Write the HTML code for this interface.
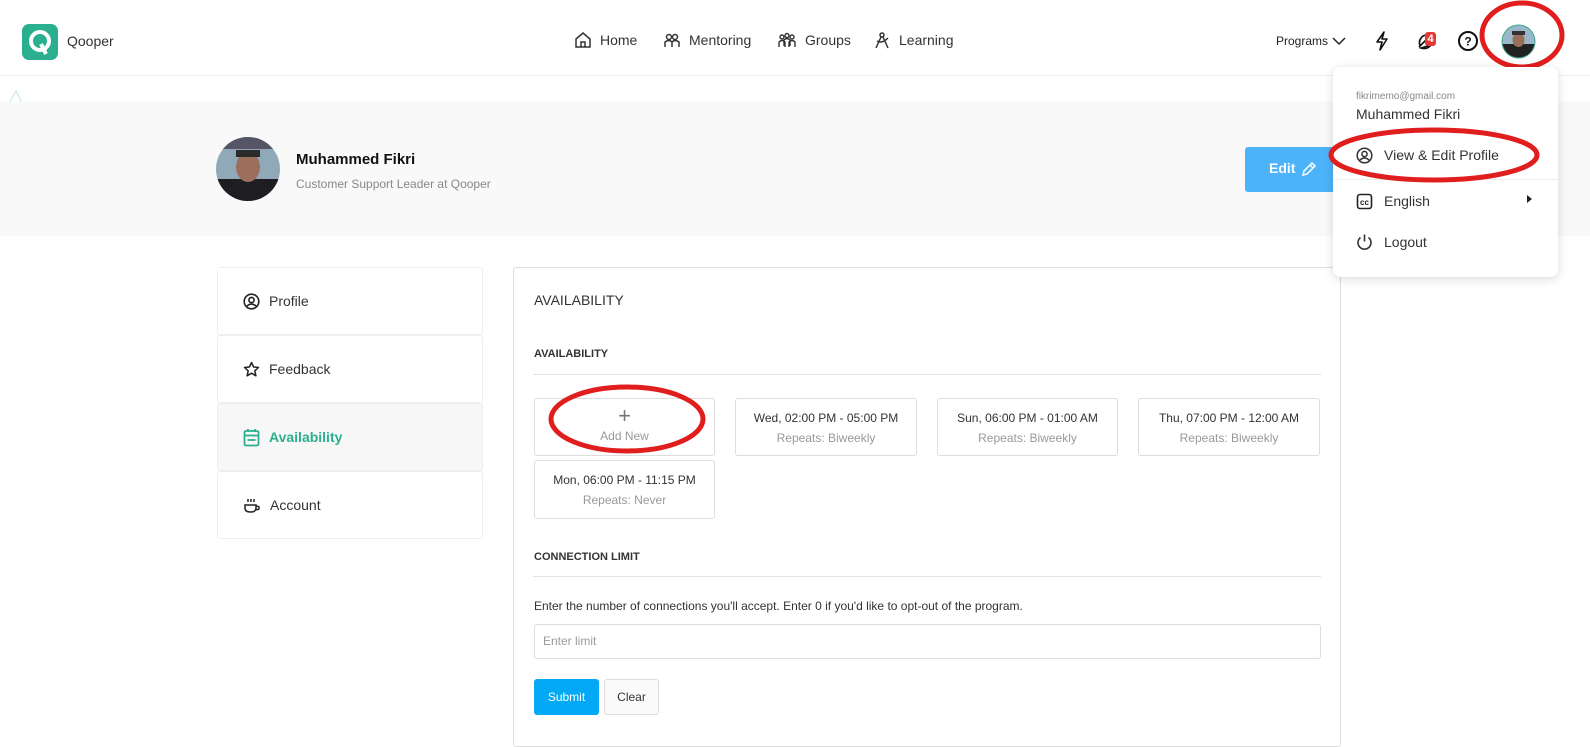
<!DOCTYPE html>
<html><head><meta charset="utf-8">
<style>
*{box-sizing:border-box;margin:0;padding:0}
body{width:1590px;height:738px;overflow:hidden;background:#fff;font-family:"Liberation Sans",Arial,sans-serif;color:#222;position:relative}
.a{position:absolute}
.nav{font-size:14px;color:#333;display:flex;align-items:center;gap:8px}
.card{position:absolute;border:1px solid #ddd;border-radius:3px;text-align:center;background:#fff}
.card .t{font-size:12px;color:#333;margin-top:12px}
.card .s{font-size:12px;color:#999;margin-top:6px}
.side{position:absolute;left:217px;width:266px;height:68px;border:1px solid #eee;border-radius:3px;display:flex;align-items:center;padding-left:25px;gap:9px;font-size:14px;color:#333;background:#fff}
svg{display:block}
</style></head><body>

<!-- header -->
<div class="a" style="left:0;top:0;width:1590px;height:76px;border-bottom:1px solid #eee"></div>
<div class="a" style="left:22px;top:24px;width:36px;height:36px;background:#2bb08f;border-radius:7px">
<svg width="36" height="36"><circle cx="18" cy="17" r="9" fill="none" stroke="#fff" stroke-width="4"/><path d="M19 20 L24 30" stroke="#fff" stroke-width="4"/></svg></div>
<div class="a" style="left:67px;top:33px;font-size:14px;color:#333">Qooper</div>
<svg class="a" style="left:8px;top:90px" width="16" height="14"><path d="M1 13 L8 1 L14 13" fill="none" stroke="#bfe6dc" stroke-width="1"/></svg>

<div class="a nav" style="left:574px;top:31px"><svg width="18" height="18" viewBox="0 0 18 18"><path d="M2 8 L9 2 L16 8 V16 H2Z M7 16 V11 H11 V16" fill="none" stroke="#333" stroke-width="1.5"/></svg>Home</div>
<div class="a nav" style="left:663px;top:31px"><svg width="18" height="18" viewBox="0 0 18 18"><circle cx="6" cy="6" r="2.5" fill="none" stroke="#333" stroke-width="1.5"/><circle cx="12" cy="6" r="2.5" fill="none" stroke="#333" stroke-width="1.5"/><path d="M2 16 V11 Q6 8 9 11 V16 M9 11 Q12 8 16 11 V16" fill="none" stroke="#333" stroke-width="1.5"/></svg>Mentoring</div>
<div class="a nav" style="left:777px;top:31px"><svg width="20" height="18" viewBox="0 0 20 18"><circle cx="5" cy="6" r="2" fill="none" stroke="#333" stroke-width="1.4"/><circle cx="10" cy="4.5" r="2" fill="none" stroke="#333" stroke-width="1.4"/><circle cx="15" cy="6" r="2" fill="none" stroke="#333" stroke-width="1.4"/><path d="M2 16 V11 Q5 8 8 11 V16 M7 15 V9 Q10 6 13 9 V15 M12 16 V11 Q15 8 18 11 V16" fill="none" stroke="#333" stroke-width="1.4"/></svg>Groups</div>
<div class="a nav" style="left:873px;top:31px"><svg width="18" height="18" viewBox="0 0 18 18"><circle cx="9" cy="4" r="2" fill="none" stroke="#333" stroke-width="1.5"/><path d="M8 6 L3 17 M10 6 L15 17 M4 10 Q9 13 15 7" fill="none" stroke="#333" stroke-width="1.5"/></svg>Learning</div>

<div class="a" style="left:1276px;top:34px;font-size:12px;color:#222">Programs</div>
<svg class="a" style="left:1331px;top:35px" width="16" height="12"><path d="M2 3 L8 9 L14 3" fill="none" stroke="#222" stroke-width="1.5"/></svg>
<svg class="a" style="left:1374px;top:31px" width="16" height="20" viewBox="0 0 16 20"><path d="M10 1 L3 11 H8 L6 19 L13 8 H8 Z" fill="none" stroke="#111" stroke-width="1.6" stroke-linejoin="round"/></svg>
<svg class="a" style="left:1415px;top:32px" width="20" height="20"><path d="M4 15 L15 4 M5 14 Q3 8 8 4 Q12 2 15 4 M6 16 Q12 18 16 13 Z" fill="none" stroke="#111" stroke-width="1.6"/></svg>
<div class="a" style="left:1425px;top:32px;width:11px;height:14px;background:#e53935;border-radius:3px;color:#fff;font-size:11px;font-weight:bold;text-align:center;line-height:14px">4</div>
<svg class="a" style="left:1457px;top:30px" width="22" height="22"><circle cx="11" cy="11" r="9" fill="none" stroke="#111" stroke-width="2"/><text x="11" y="15.5" font-size="12" font-weight="bold" text-anchor="middle" fill="#111" font-family="Liberation Sans">?</text></svg>
<svg class="a" style="left:1501px;top:24px" width="35" height="35"><defs><clipPath id="c2"><circle cx="17.5" cy="17.5" r="16"/></clipPath></defs><circle cx="17.5" cy="17.5" r="17" fill="#3aa58c"/><g clip-path="url(#c2)"><rect width="35" height="35" fill="#9bb8c8"/><rect y="20" width="35" height="15" fill="#222"/><ellipse cx="17.5" cy="16" rx="6" ry="7" fill="#9a6f5a"/><rect x="11" y="7" width="13" height="4" fill="#333"/></g></svg>
<svg class="a" style="left:1478px;top:0" width="90" height="72"><ellipse cx="44" cy="35" rx="40" ry="32" fill="none" stroke="#e01e1e" stroke-width="5"/></svg>

<!-- band -->
<div class="a" style="left:0;top:102px;width:1590px;height:134px;background:#f9f9f9"></div>
<svg class="a" style="left:216px;top:137px" width="64" height="64"><defs><clipPath id="c1"><circle cx="32" cy="32" r="32"/></clipPath></defs><g clip-path="url(#c1)"><rect width="64" height="64" fill="#8fa9b8"/><rect y="0" width="64" height="12" fill="#556"/><rect y="42" width="64" height="22" fill="#1e1e22"/><ellipse cx="32" cy="30" rx="12" ry="15" fill="#9c6f5c"/><rect x="20" y="13" width="24" height="7" fill="#2a2a2a"/></g></svg>
<div class="a" style="left:296px;top:151px;font-size:15px;font-weight:bold;color:#111">Muhammed Fikri</div>
<div class="a" style="left:296px;top:177px;font-size:12px;color:#888">Customer Support Leader at Qooper</div>
<div class="a" style="left:1245px;top:147px;width:100px;height:45px;background:#4db3f9;border-radius:3px;color:#fff;font-weight:bold;font-size:14px;padding:13px 0 0 24px">Edit
<svg style="position:absolute;left:56px;top:14px" width="16" height="16"><path d="M2 14 L3 10 L11 2 L14 5 L6 13 Z M9 4 L12 7" fill="none" stroke="#fff" stroke-width="1.5"/></svg></div>

<!-- sidebar -->
<div class="side" style="top:267px"><svg width="17" height="17"><circle cx="8.5" cy="8.5" r="7.3" fill="none" stroke="#222" stroke-width="1.6"/><circle cx="8.5" cy="7" r="2.6" fill="none" stroke="#222" stroke-width="1.6"/><path d="M3.5 13.5 Q8.5 8.5 13.5 13.5" fill="none" stroke="#222" stroke-width="1.6"/></svg>Profile</div>
<div class="side" style="top:335px"><svg width="17" height="17" viewBox="0 0 17 17"><path d="M8.5 1.5 L10.6 6 L15.5 6.5 L11.8 9.8 L12.9 14.8 L8.5 12.2 L4.1 14.8 L5.2 9.8 L1.5 6.5 L6.4 6 Z" fill="none" stroke="#222" stroke-width="1.5" stroke-linejoin="round"/></svg>Feedback</div>
<div class="side" style="top:403px;background:#f7f7f7;color:#2bb08f;font-weight:bold"><svg width="17" height="19"><rect x="1.5" y="3" width="14" height="14.5" rx="1.5" fill="none" stroke="#2bb08f" stroke-width="1.8"/><path d="M1.5 7.5 H15.5 M5 1 V4 M12 1 V4 M4.5 12 H12.5" stroke="#2bb08f" stroke-width="1.8"/></svg>Availability</div>
<div class="side" style="top:471px"><svg width="18" height="17"><path d="M2 8 H13 V11 Q13 15 7.5 15 Q2 15 2 11 Z M13 9 Q16.5 9 16 11.5 Q15.5 13 13 12.5 M5 2 V5 M8 2 V5 M11 2 V5" fill="none" stroke="#222" stroke-width="1.5"/></svg>Account</div>

<!-- main panel -->
<div class="a" style="left:513px;top:267px;width:828px;height:480px;border:1px solid #ddd;border-radius:3px"></div>
<div class="a" style="left:534px;top:292px;font-size:14px;color:#333">AVAILABILITY</div>
<div class="a" style="left:534px;top:348px;font-size:11px;font-weight:bold;color:#333">AVAILABILITY</div>
<div class="a" style="left:533px;top:374px;width:788px;height:1px;background:#e2e2e2"></div>

<div class="card" style="left:534px;top:398px;width:181px;height:58px"><div style="font-size:22px;color:#777;font-weight:300;line-height:20px;margin-top:7px">+</div><div class="s" style="margin-top:3px">Add New</div></div>
<div class="card" style="left:735px;top:398px;width:182px;height:58px"><div class="t">Wed, 02:00 PM - 05:00 PM</div><div class="s">Repeats: Biweekly</div></div>
<div class="card" style="left:937px;top:398px;width:181px;height:58px"><div class="t">Sun, 06:00 PM - 01:00 AM</div><div class="s">Repeats: Biweekly</div></div>
<div class="card" style="left:1138px;top:398px;width:182px;height:58px"><div class="t">Thu, 07:00 PM - 12:00 AM</div><div class="s">Repeats: Biweekly</div></div>
<div class="card" style="left:534px;top:460px;width:181px;height:59px"><div class="t">Mon, 06:00 PM - 11:15 PM</div><div class="s">Repeats: Never</div></div>
<svg class="a" style="left:546px;top:382px" width="162" height="74"><ellipse cx="81" cy="37" rx="76" ry="32" fill="none" stroke="#e01e1e" stroke-width="5"/></svg>

<div class="a" style="left:534px;top:551px;font-size:11px;font-weight:bold;color:#333">CONNECTION LIMIT</div>
<div class="a" style="left:533px;top:576px;width:788px;height:1px;background:#e2e2e2"></div>
<div class="a" style="left:534px;top:599px;font-size:12px;color:#333">Enter the number of connections you'll accept. Enter 0 if you'd like to opt-out of the program.</div>
<div class="a" style="left:534px;top:624px;width:787px;height:35px;border:1px solid #ddd;border-radius:3px;font-size:12px;color:#999;padding:9px 0 0 8px">Enter limit</div>
<div class="a" style="left:534px;top:679px;width:65px;height:36px;background:#03a9f4;border-radius:3px;color:#fff;font-size:12px;text-align:center;line-height:36px">Submit</div>
<div class="a" style="left:604px;top:679px;width:55px;height:36px;background:#fafafa;border:1px solid #ddd;border-radius:3px;color:#333;font-size:12px;text-align:center;line-height:34px">Clear</div>

<!-- dropdown -->
<div class="a" style="left:1333px;top:67px;width:225px;height:210px;background:#fff;border-radius:8px;box-shadow:0 2px 10px rgba(0,0,0,.15)">
<div class="a" style="left:23px;top:24px;font-size:10px;color:#888">fikrimemo@gmail.com</div>
<div class="a" style="left:23px;top:39px;font-size:14px;color:#333">Muhammed Fikri</div>
<svg class="a" style="left:23px;top:80px" width="17" height="17"><circle cx="8.5" cy="8.5" r="7.3" fill="none" stroke="#333" stroke-width="1.5"/><circle cx="8.5" cy="7" r="2.6" fill="none" stroke="#333" stroke-width="1.5"/><path d="M3.5 13.5 Q8.5 8.5 13.5 13.5" fill="none" stroke="#333" stroke-width="1.5"/></svg>
<div class="a" style="left:51px;top:80px;font-size:14px;color:#333">View &amp; Edit Profile</div>
<div class="a" style="left:0;top:112px;width:225px;height:1px;background:#eee"></div>
<svg class="a" style="left:23px;top:126px" width="17" height="17"><rect x="1.5" y="1.5" width="14" height="14" rx="2.5" fill="none" stroke="#222" stroke-width="1.6"/><text x="8.5" y="12" font-size="8" font-weight="bold" text-anchor="middle" fill="#222" font-family="Liberation Sans">cc</text></svg>
<div class="a" style="left:51px;top:126px;font-size:14px;color:#333">English</div>
<div class="a" style="left:194px;top:128px;width:0;height:0;border-left:5px solid #222;border-top:4px solid transparent;border-bottom:4px solid transparent"></div>
<svg class="a" style="left:23px;top:166px" width="17" height="18"><path d="M8.5 1.5 V8.5 M4.5 4.5 A6.5 6.5 0 1 0 12.5 4.5" fill="none" stroke="#333" stroke-width="1.6"/></svg>
<div class="a" style="left:51px;top:167px;font-size:14px;color:#333">Logout</div>
</div>
<svg class="a" style="left:1327px;top:126px" width="214" height="60"><ellipse cx="107" cy="29" rx="103" ry="25" fill="none" stroke="#e01e1e" stroke-width="5"/></svg>

</body></html>
